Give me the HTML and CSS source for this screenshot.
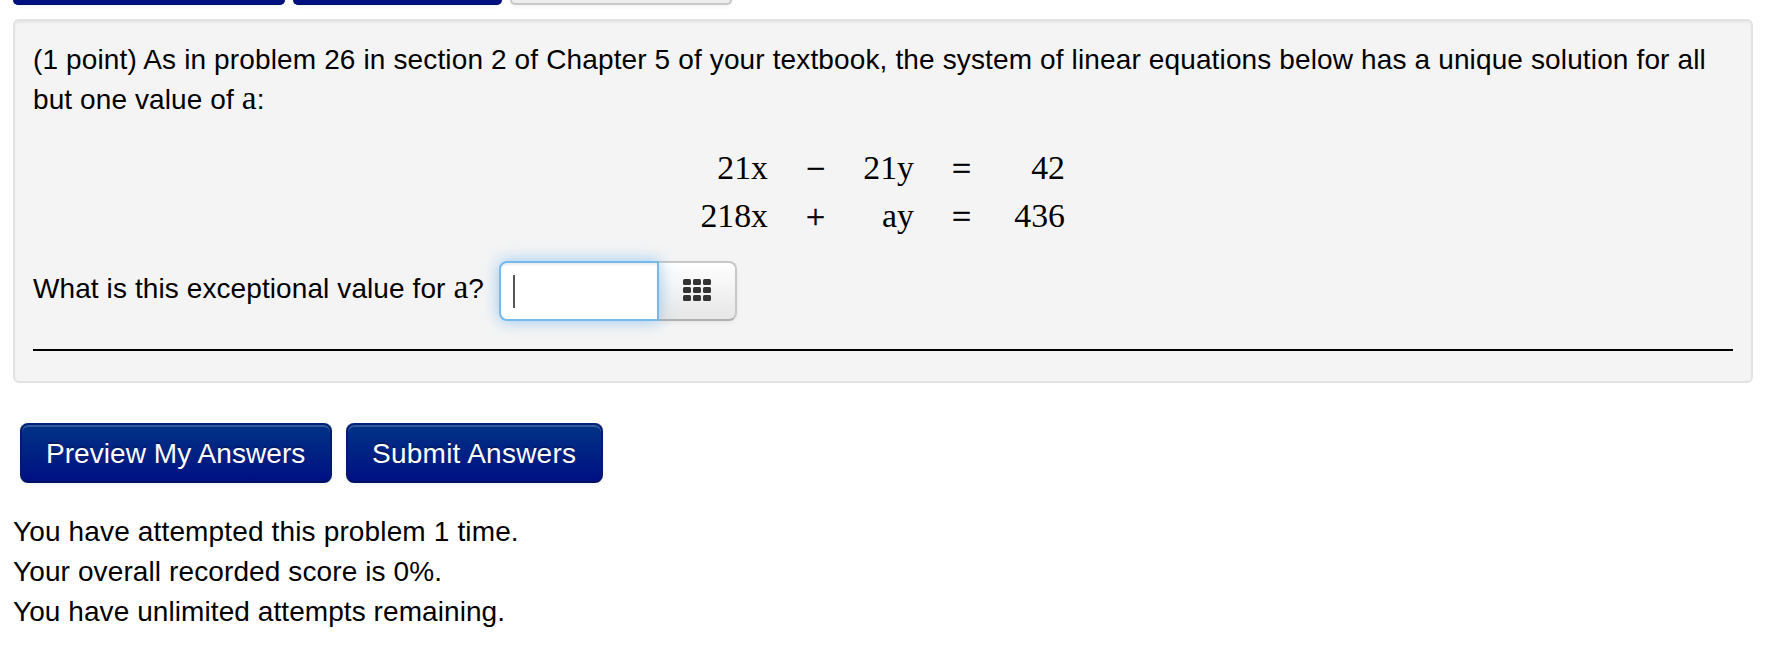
FILE: index.html
```
<!DOCTYPE html>
<html lang="en">
<head>
<meta charset="utf-8">
<title>Problem</title>
<link rel="stylesheet" href="styles.css">
</head>
<body>

<div class="nav">
    <div class="nav-btn prev"></div>
    <div class="nav-btn list"></div>
    <div class="nav-btn next"></div>
</div>

<div class="problem">
    <p class="intro"><span class="line1">(1 point) As in problem 26 in section 2 of Chapter 5 of your textbook, the system of linear equations below has a unique solution for all</span><br>
    <span class="line2">but one value of <span class="math">a</span>:</span></p>

    <div class="system">
        <span>21x</span><span class="op">−</span><span>21y</span><span class="op">=</span><span>42</span>
        <span>218x</span><span class="op">+</span><span>ay</span><span class="op">=</span><span>436</span>
    </div>

    <div class="question">
        <label for="answer">What is this exceptional value for <span class="math">a</span>?</label>
        <div class="answer" id="answer"><span class="caret"></span></div>
        <div class="keypad">
            <svg width="28" height="22" viewBox="0 0 28 22" fill="#333">
                <rect x="0" y="0" width="8" height="6" rx="1.5"/>
                <rect x="10" y="0" width="8" height="6" rx="1.5"/>
                <rect x="20" y="0" width="8" height="6" rx="1.5"/>
                <rect x="0" y="8" width="8" height="6" rx="1.5"/>
                <rect x="10" y="8" width="8" height="6" rx="1.5"/>
                <rect x="20" y="8" width="8" height="6" rx="1.5"/>
                <rect x="0" y="16" width="8" height="6" rx="1.5"/>
                <rect x="10" y="16" width="8" height="6" rx="1.5"/>
                <rect x="20" y="16" width="8" height="6" rx="1.5"/>
            </svg>
        </div>
    </div>

    <div class="rule"></div>
</div>

<div class="buttons">
    <button class="btn preview">Preview My Answers</button>
    <button class="btn submit">Submit Answers</button>
</div>

<div class="score">
    <div class="s1">You have attempted this problem 1 time.</div>
    <div class="s2">Your overall recorded score is 0%.</div>
    <div class="s3">You have unlimited attempts remaining.</div>
</div>

</body>
</html>
```

FILE: styles.css
```
* {
box-sizing: border-box;
}

body {
margin: 0;
padding: 0 38px 0 13px;
background: #fff;
color: #000;
font-family: "Liberation Sans", Arial, sans-serif;
font-size: 28px;
line-height: 40px;
overflow: hidden;
}

/* bottom edge of the navigation buttons */
.nav {
display: flex;
height: 5px;
gap: 8px;
}

.nav-btn {
height: 5px;
background: #001080;
border-bottom: 1px solid #001060;
border-radius: 0 0 8px 8px;
box-shadow: 0 2px 4px rgba(0,0,0,.05);
}

.prev {
width: 272px;
}

.list {
width: 209px;
}

.next {
width: 222px;
background: #ededed;
border: 2px solid #c8c8c8;
border-top: 0;
}

.problem {
height: 364px;
margin-top: 14px;
padding: 19px 18px 18px;
background: #f4f4f4;
border: 2px solid #e2e2e2;
border-radius: 6px;
box-shadow: inset 0 2px 2px rgba(0,0,0,.05);
}

.intro {
margin: 0;
white-space: nowrap;
}

.line1 {
letter-spacing: .134px;
}

.line2 {
letter-spacing: .1px;
}

.math {
font-family: "Liberation Serif", "Times New Roman", serif;
font-size: 33.3px;
line-height: 1px;
}

.system {
display: grid;
grid-template-columns: 68px 57px 89px 57px 94px;
grid-auto-rows: 48px;
width: 365px;
margin: 24px 0 0 667px;
font-family: "Liberation Serif", "Times New Roman", serif;
font-size: 33.8px;
line-height: 48px;
text-align: right;
}

.op {
padding-top: 1px;
-webkit-text-stroke: .5px #000;
}

.question {
display: flex;
margin-top: 21px;
height: 60px;
}

.question label {
width: 466px;
padding-top: 8px;
letter-spacing: .095px;
white-space: nowrap;
}

.answer {
position: relative;
z-index: 1;
width: 160px;
height: 60px;
padding: 12px;
background: #fff;
border: 2px solid #76b9ed;
border-radius: 8px 0 0 8px;
box-shadow: inset 0 2px 2px rgba(0,0,0,.075), 0 0 16px rgba(82,168,236,.6);
}

.caret {
display: block;
width: 2px;
height: 33px;
background: #555;
}

.keypad {
display: flex;
align-items: center;
width: 78px;
height: 60px;
padding: 0 0 2px 24px;
background: linear-gradient(#fff, #e6e6e6);
border: 2px solid #c8c8c8;
border-left: 0;
border-bottom-color: #b0b0b0;
border-radius: 0 8px 8px 0;
box-shadow: 0 2px 4px rgba(0,0,0,.05);
}

.rule {
height: 2px;
margin-top: 28px;
background: #000;
}

.buttons {
display: flex;
gap: 14px;
margin: 40px 0 0 7px;
}

.btn {
height: 60px;
padding: 2px 0 0 24px;
border: 2px solid #002070;
border-color: #00237a #001a70 #001060;
border-radius: 8px;
background: linear-gradient(#003385, #001083);
box-shadow: inset 0 2px 0 rgba(255,255,255,.2), 0 2px 4px rgba(0,0,0,.05);
color: #fff;
font-family: inherit;
font-size: 28px;
line-height: 40px;
text-align: left;
text-shadow: 0 -2px 0 rgba(0,0,0,.25);
white-space: nowrap;
}

.preview {
width: 312px;
letter-spacing: .06px;
}

.submit {
width: 257px;
letter-spacing: .25px;
}

.score {
margin-top: 29px;
}

.s1 {
letter-spacing: .145px;
}

.s2 {
letter-spacing: .11px;
}

.s3 {
letter-spacing: .075px;
}
```
